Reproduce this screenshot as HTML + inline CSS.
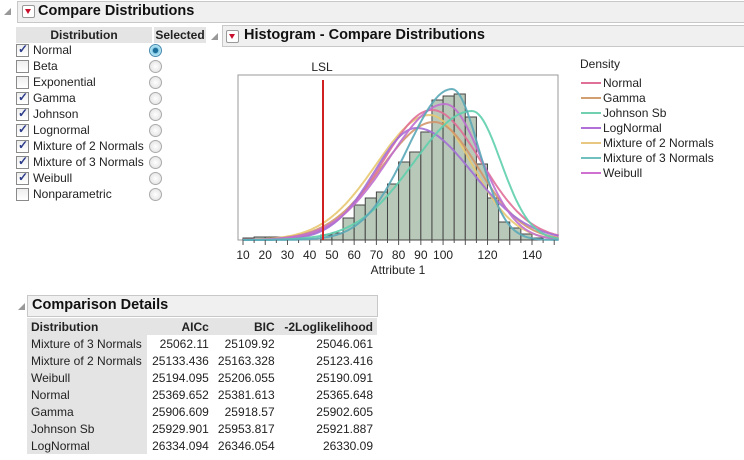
<!DOCTYPE html><html><head><style>
body{margin:0;width:744px;height:460px;background:#fff;font-family:"Liberation Sans",sans-serif;font-size:12px;color:#222;position:relative;overflow:hidden}
.a{position:absolute;white-space:nowrap}
.hdr{position:absolute;background:#f0f0f0;border:1px solid #c8c8c8;font-weight:bold;font-size:14.5px;color:#111}
.dd{position:absolute;width:11px;height:11px;border:1px solid #999;background:#fff;border-radius:2px}
.dd:after{content:"";position:absolute;left:2px;top:3px;border-left:3.5px solid transparent;border-right:3.5px solid transparent;border-top:5px solid #c8102e}
.tri{position:absolute;width:0;height:0;border-left:7px solid transparent;border-bottom:7px solid #999}
.cb{position:absolute;width:11px;height:11px;border:1px solid #8a8a8a;background:linear-gradient(#eee,#fff)}
.ck:after{content:"✓";position:absolute;left:1px;top:-3px;font-size:12px;color:#2a3a8a;font-weight:bold}
.rb{position:absolute;width:11px;height:11px;border-radius:50%;border:1px solid #aaa;background:radial-gradient(#fff,#ddd)}
td{padding:0 4px;height:17px;font-size:12px;white-space:nowrap}
</style></head><body>
<div class="tri" style="left:4px;top:8px"></div>
<div class="hdr" style="left:17px;top:1px;width:740px;height:20px"><span style="position:absolute;left:20px;top:1px">Compare Distributions</span></div>
<div class="dd" style="left:22px;top:5px"></div>
<div class="a" style="left:16px;top:27px;width:136px;height:16px;background:#e4e4e4;font-weight:bold;text-align:center;line-height:16px">Distribution</div>
<div class="a" style="left:154px;top:27px;width:52px;height:16px;background:#e4e4e4;font-weight:bold;text-align:center;line-height:16px">Selected</div>
<div id="rows"></div>
<div class="tri" style="left:211px;top:33px"></div>
<div class="hdr" style="left:222px;top:25px;width:530px;height:20px"><span style="position:absolute;left:21px;top:1px">Histogram - Compare Distributions</span></div>
<div class="dd" style="left:226px;top:30px"></div>
<svg class="a" style="left:0;top:0" width="744" height="290" id="plot"></svg>
<div class="tri" style="left:18px;top:303px"></div>
<div class="hdr" style="left:27px;top:295px;width:349px;height:20px"><span style="position:absolute;left:4px;top:1px">Comparison Details</span></div>
<table class="a" style="left:27px;top:318px;border-collapse:collapse;width:350px">
<tr style="background:#e4e4e4;font-weight:bold"><td style="font-weight:bold;width:112px">Distribution</td><td style="text-align:right;font-weight:bold">AICc</td><td style="text-align:right;font-weight:bold">BIC</td><td style="text-align:right;font-weight:bold">-2Loglikelihood</td></tr>
<tbody id="tb"></tbody></table>
<script>
var names=["Normal","Beta","Exponential","Gamma","Johnson","Lognormal","Mixture of 2 Normals","Mixture of 3 Normals","Weibull","Nonparametric"],ck=[1,0,0,1,1,1,1,1,1,0],h="";
names.forEach(function(n,i){var y=44+i*16;h+='<div class="cb'+(ck[i]?' ck':'')+'" style="left:16px;top:'+y+'px"></div><div class="a" style="left:33px;top:'+(y-1)+'px">'+n+'</div><div class="rb" style="left:149px;top:'+y+'px;'+(i==0?'background:radial-gradient(#1b6f9a 30%,#8fd0ea 40%,#dff);border-color:#4a8ab0':'')+'"></div>'});
document.getElementById("rows").innerHTML=h;
var d=[["Mixture of 3 Normals","25062.11","25109.92","25046.061"],["Mixture of 2 Normals","25133.436","25163.328","25123.416"],["Weibull","25194.095","25206.055","25190.091"],["Normal","25369.652","25381.613","25365.648"],["Gamma","25906.609","25918.57","25902.605"],["Johnson Sb","25929.901","25953.817","25921.887"],["LogNormal","26334.094","26346.054","26330.09"]];
h="";d.forEach(function(r){h+='<tr><td style="background:#e4e4e4">'+r[0]+'</td><td style="text-align:right">'+r[1]+'</td><td style="text-align:right">'+r[2]+'</td><td style="text-align:right">'+r[3]+'</td></tr>'});
document.getElementById("tb").innerHTML=h;
function X(v){return 243+(v-10)*2.223}
var s='<rect x="238" y="75" width="320" height="165" fill="#fff" stroke="#999"/>';
var tops=[238,237,237,237,240,240,240,235,233,218,205,198,192,184,162,152,132,100,96,94,117,164,198,222,228,234,238];
tops.forEach(function(t,i){var v=10+i*5;if(t<240)s+='<rect x="'+X(v)+'" y="'+t+'" width="11.1" height="'+(240-t)+'" fill="#b9c9b9" stroke="#444" stroke-width="1"/>'});
var c=[["#e8c870",94,24,19,125],["#d2956a",96,24,20,118],["#e07098",95,22,22,130],["#a36fd6",88,19,25,112],["#c070d0",101,25,16,136],["#5fcfad",113,26,13,129],["#5aa9b8",104,20,12,151]];
c.forEach(function(q){var p="";for(var v=10;v<=152;v+=1){var sg=v<q[1]?q[2]:q[3];var y=240-q[4]*Math.exp(-Math.pow(v-q[1],2)/(2*sg*sg));p+=(p?"L":"M")+X(v).toFixed(1)+","+y.toFixed(1)}s+='<path d="'+p+'" fill="none" stroke="'+q[0]+'" stroke-width="2" opacity="0.9"/>'});
s+='<line x1="323" y1="80" x2="323" y2="240" stroke="#d02020" stroke-width="2"/>';
s+='<text x="322" y="71" font-size="12" text-anchor="middle" fill="#222">LSL</text>';
for(var v=10;v<=150;v+=5)s+='<line x1="'+X(v)+'" y1="240" x2="'+X(v)+'" y2="'+(v%10?243:245)+'" stroke="#555"/>';
[10,20,30,40,50,60,70,80,90,100,120,140].forEach(function(v){s+='<text x="'+X(v)+'" y="259" font-size="12" text-anchor="middle" fill="#222">'+v+'</text>'});
s+='<text x="398" y="274" font-size="12" text-anchor="middle" fill="#222">Attribute 1</text>';
s+='<text x="580" y="68" font-size="12" fill="#222">Density</text>';
var L=[["Normal","#e07098"],["Gamma","#d2a070"],["Johnson Sb","#70d0b0"],["LogNormal","#b070d8"],["Mixture of 2 Normals","#e8c880"],["Mixture of 3 Normals","#70c0c0"],["Weibull","#d070d0"]];
L.forEach(function(l,i){var y=83+i*15;s+='<line x1="581" y1="'+y+'" x2="601" y2="'+y+'" stroke="'+l[1]+'" stroke-width="2"/><text x="603" y="'+(y+4)+'" font-size="12" fill="#222">'+l[0]+'</text>'});
document.getElementById("plot").innerHTML=s;
</script>
</body></html>
